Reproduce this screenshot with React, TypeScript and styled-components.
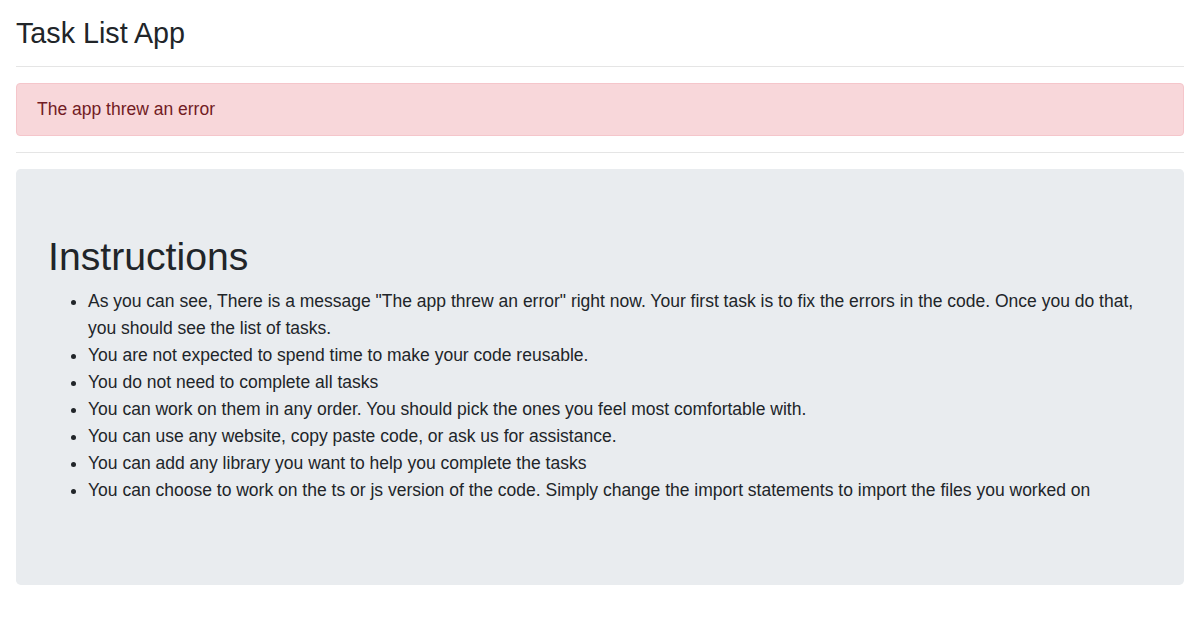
import React from "react";
import styled, { createGlobalStyle } from "styled-components";

const Global = createGlobalStyle`
  * { box-sizing: border-box; }
  body {
    margin: 0;
    font-family: "Liberation Sans", Arial, Helvetica, sans-serif;
    font-size: 17.5px;
    line-height: 27px;
    color: #212529;
    background: #fff;
  }
`;

const Container = styled.div`
  padding: 16px 16px;
`;

const Title = styled.h3`
  margin: 0 0 8px;
  font-size: 28.7px;
  font-weight: 400;
  line-height: 1.2;
`;

const Rule = styled.hr`
  margin: 16px 0;
  border: 0;
  border-top: 1px solid rgba(0, 0, 0, 0.1);
`;

const Alert = styled.div`
  padding: 12px 20px;
  margin-bottom: 16px;
  border: 1px solid #f5c6cb;
  border-radius: 4px;
  background: #f8d7da;
  color: #721c24;
`;

const Jumbotron = styled.div`
  padding: 64px 32px;
  margin-bottom: 32px;
  background: #e9ecef;
  border-radius: 4.8px;
`;

const Heading = styled.h1`
  margin: 0 0 8px;
  font-size: 39.2px;
  font-weight: 400;
  line-height: 1.2;
`;

const List = styled.ul`
  margin: 0 0 17px;
  padding-left: 40px;
`;

const items = [
  'As you can see, There is a message "The app threw an error" right now. Your first task is to fix the errors in the code. Once you do that, you should see the list of tasks.',
  "You are not expected to spend time to make your code reusable.",
  "You do not need to complete all tasks",
  "You can work on them in any order. You should pick the ones you feel most comfortable with.",
  "You can use any website, copy paste code, or ask us for assistance.",
  "You can add any library you want to help you complete the tasks",
  "You can choose to work on the ts or js version of the code. Simply change the import statements to import the files you worked on",
];

export default function App() {
  return (
    <>
      <Global />
      <Container>
        <Title>Task List App</Title>
        <Rule />
        <Alert>The app threw an error</Alert>
        <Rule />
        <Jumbotron>
          <Heading>Instructions</Heading>
          <List>
            {items.map((t) => (
              <li key={t}>{t}</li>
            ))}
          </List>
        </Jumbotron>
      </Container>
    </>
  );
}
